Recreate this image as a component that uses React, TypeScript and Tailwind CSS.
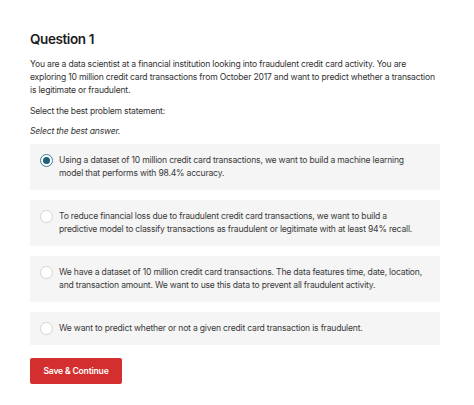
const OPTIONS = [
  [
    'Using a dataset of 10 million credit card transactions, we want to build a machine learning',
    'model that performs with 98.4% accuracy.',
  ],
  [
    'To reduce financial loss due to fraudulent credit card transactions, we want to build a',
    'predictive model to classify transactions as fraudulent or legitimate with at least 94% recall.',
  ],
  [
    'We have a dataset of 10 million credit card transactions. The data features time, date, location,',
    'and transaction amount. We want to use this data to prevent all fraudulent activity.',
  ],
  ['We want to predict whether or not a given credit card transaction is fraudulent.'],
]

const INTRO = [
  'You are a data scientist at a financial institution looking into fraudulent credit card activity. You are',
  'exploring 10 million credit card transactions from October 2017 and want to predict whether a transaction',
  'is legitimate or fraudulent.',
]

function Radio({ checked }: { checked: boolean }) {
  return (
    <div
      className={
        checked
          ? 'w-[13px] h-[13px] rounded-full border-[1.5px] border-[#3a7d97] bg-white flex items-center justify-center shrink-0'
          : 'w-[13px] h-[13px] rounded-full border border-[#d4d4d4] bg-white shrink-0'
      }
    >
      {checked && <div className="w-[7px] h-[7px] rounded-full bg-[#1f5f7b]" />}
    </div>
  )
}

export default function App() {
  return (
    <div
      className="w-[474px] h-[405px] bg-white text-[#333] px-[30px] pt-[30px] tracking-[-0.2px]"
      style={{ fontFamily: 'Inter, "Liberation Sans", sans-serif' }}
    >
      <h1 className="text-[13.5px] font-semibold text-[#1c1c1c] leading-[18px] tracking-[-0.4px]">Question 1</h1>
      <p className="mt-[10px] text-[8.6px] leading-[13px] whitespace-nowrap">
        {INTRO.map((line, i) => (
          <span key={i} className="block">
            {line}
          </span>
        ))}
      </p>
      <p className="mt-[8px] text-[8.6px] leading-[13px]">Select the best problem statement:</p>
      <p className="mt-[7px] text-[8.6px] leading-[13px] italic">Select the best answer.</p>

      <div className="mt-[6px] w-[410px] flex flex-col gap-[10px]">
        {OPTIONS.map((lines, i) => (
          <div key={i} className="bg-[#f5f5f5] flex items-start gap-[6px] pl-[10px] pr-[10px] py-[10px]">
            <Radio checked={i === 0} />
            <p className="text-[8.6px] leading-[13px] text-[#3a3a3a] whitespace-nowrap">
              {lines.map((line, j) => (
                <span key={j} className="block">
                  {line}
                </span>
              ))}
            </p>
          </div>
        ))}
      </div>

      <button className="mt-[13px] w-[92px] h-[26px] bg-[#d32f2f] rounded-[2px] text-white text-[8.6px] font-semibold">
        Save &amp; Continue
      </button>
    </div>
  )
}
